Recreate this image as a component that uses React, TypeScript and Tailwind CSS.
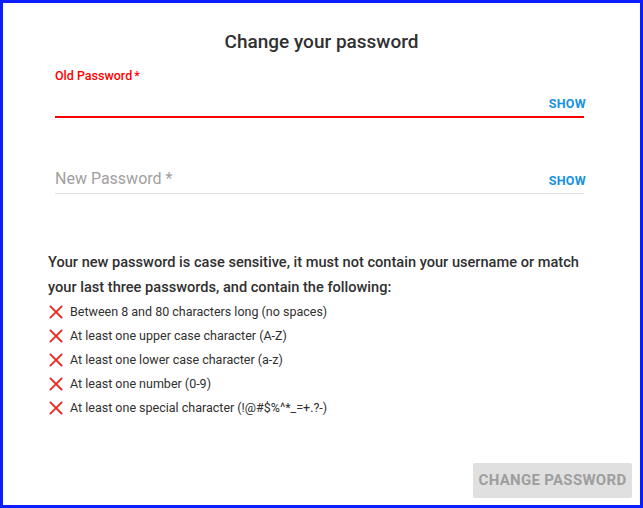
import React, { useState } from "react";

const rules = [
  "Between 8 and 80 characters long (no spaces)",
  "At least one upper case character (A-Z)",
  "At least one lower case character (a-z)",
  "At least one number (0-9)",
  "At least one special character (!@#$%^*_=+.?-)",
];

const CrossIcon = () => (
  <svg width="14" height="14" viewBox="0 0 14 14" className="shrink-0">
    <path d="M1.5 1.5 L12.5 12.5 M12.5 1.5 L1.5 12.5" stroke="#ee2b1f" strokeWidth="1.8" strokeLinecap="square" />
  </svg>
);

const App: React.FC = () => {
  const [oldPw, setOldPw] = useState("");
  const [newPw, setNewPw] = useState("");
  const [showOld, setShowOld] = useState(false);
  const [showNew, setShowNew] = useState(false);

  return (
    <div
      className="w-[643px] h-[508px] border-[3px] border-[#0a1eff] bg-white flex flex-col text-[#303030]"
      style={{ fontFamily: "Roboto, 'Liberation Sans', sans-serif" }}
    >
      {/* title */}
      <h1 className="mt-[27px] text-center text-[19px] leading-[24px] font-medium text-[#303030]">
        Change your password
      </h1>

      {/* fields */}
      <div className="mx-[52px] mt-[14px] w-[529px]">
        <label className="block text-[12.5px] leading-[16px] font-medium text-[#ff0000]">
          Old Password<span className="ml-[2px]">*</span>
        </label>
        <div className="flex items-end h-[34px] border-b-2 border-[#ff0000] pb-[4px]">
          <input
            type={showOld ? "text" : "password"}
            value={oldPw}
            onChange={(e) => setOldPw(e.target.value)}
            className="flex-1 outline-none bg-transparent text-[16px] leading-[20px]"
          />
          <button
            onClick={() => setShowOld(!showOld)}
            className="-mr-[2px] text-[12.5px] leading-[16px] font-bold text-[#1792e5] tracking-[0.3px]"
          >
            SHOW
          </button>
        </div>

        <div className="flex items-end mt-[36px] h-[40px] border-b border-[#e0e0e0] pb-[4px]">
          <input
            type={showNew ? "text" : "password"}
            value={newPw}
            onChange={(e) => setNewPw(e.target.value)}
            placeholder="New Password *"
            className="flex-1 outline-none bg-transparent text-[16px] leading-[20px] placeholder:text-[#a0a0a0]"
          />
          <button
            onClick={() => setShowNew(!showNew)}
            className="-mr-[2px] text-[12.5px] leading-[16px] font-bold text-[#1792e5] tracking-[0.3px]"
          >
            SHOW
          </button>
        </div>
      </div>

      {/* requirements */}
      <div className="mx-[45px] mt-[56px]">
        <p className="w-[540px] text-[14.6px] leading-[25px] font-medium text-[#303030]">
          Your new password is case sensitive, it must not contain your username or match your last three passwords, and contain the following:
        </p>
        <ul>
          {rules.map((r) => (
            <li key={r} className="flex items-center gap-[7px] h-[24px] pl-[1px] text-[12.5px] text-[#303030]">
              <CrossIcon />
              <span>{r}</span>
            </li>
          ))}
        </ul>
      </div>

      <div className="flex-1" />
      <div className="flex justify-end pr-[8px] pb-[7px]">
        <button
          disabled
          className="w-[159px] h-[35px] rounded-[2px] bg-[#e0e0e0] text-[#9e9e9e] text-[15px] font-bold tracking-[0.3px]"
        >
          CHANGE PASSWORD
        </button>
      </div>
    </div>
  );
};

export default App;
